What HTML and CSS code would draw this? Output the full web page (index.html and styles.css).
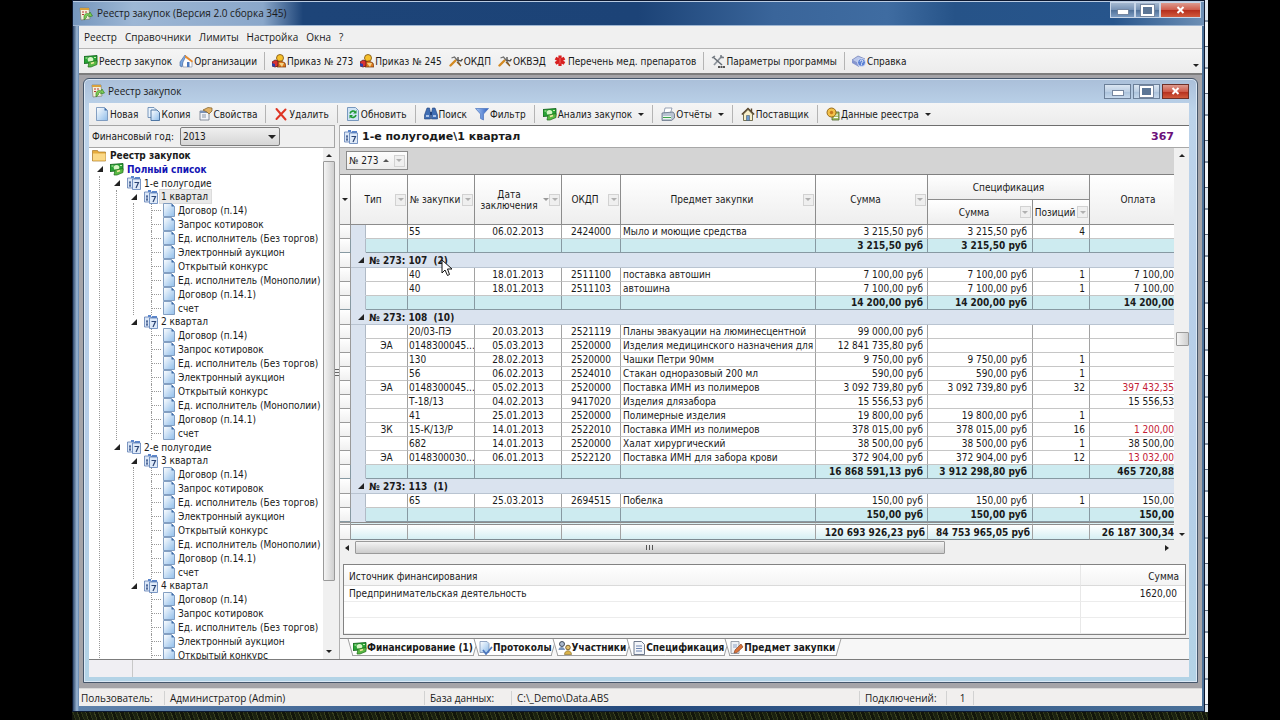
FILE: index.html
```html
<!DOCTYPE html>
<html lang="ru">

<head>
    <meta charset="UTF-8">
    <meta name="viewport" content="width=device-width, initial-scale=1.0">
    <title>Реестр закупок</title>
    <link rel="stylesheet" href="styles.css">
</head>

<body>
    <!-- icon set -->
    <svg class="defs" aria-hidden="true">
        <defs>
            <linearGradient id="paper" x1="0" y1="0" x2="1" y2="1">
                <stop offset="0" stop-color="#ffffff" />
                <stop offset="1" stop-color="#8fbdea" />
            </linearGradient>
            <linearGradient id="blue" x1="0" y1="0" x2="1" y2="0">
                <stop offset="0" stop-color="#a9c8f5" />
                <stop offset="1" stop-color="#2d5fc0" />
            </linearGradient>
        </defs>
        <symbol id="app" viewBox="0 0 14 14">
            <path d="M1 1h9l1 11-9 1z" fill="#f4f1dc" stroke="#7d7d6c" stroke-width=".7" />
            <path d="M1 1h9v2H1z" fill="#d9a13c" />
            <path d="M3 5h2M6 5h2M3 7.500h2" stroke="#b33" stroke-width="1" />
            <path d="M5 9c1-3 4-3 5-2l1-2 2.500 4-4 1 .7-1.500c-1.500-.6-2.500 0-3 2.500L5 13z" fill="#7ccb55" stroke="#2c7a1c" stroke-width=".6" />
        </symbol>
        <symbol id="money" viewBox="0 0 14 14">
            <path d="M0 2.500l13-1v7l-13 1z" fill="#2aa336" stroke="#0c5a14" stroke-width=".8" />
            <ellipse cx="6.500" cy="5.500" rx="2.800" ry="2.500" fill="#d8f5c6" />
            <path d="M1.500 4h2M10 3.500h2" stroke="#c9f0b0" />
            <path d="M5 8l8-1.500v4L7 13H4z" fill="#59b943" stroke="#1d6c1a" stroke-width=".7" />
            <path d="M7 9.500l3-1" stroke="#f5e7a0" stroke-width="1.500" />
        </symbol>
        <symbol id="house" viewBox="0 0 14 14">
            <path d="M3 7l4-5 6 5v6H4z" fill="#fdfdfd" stroke="#8a93a8" stroke-width=".7" />
            <path d="M1 8l5-7 1 1-3 6-1 5-2-1z" fill="#7aa7e0" stroke="#42659d" stroke-width=".6" />
            <path d="M6 1l8 6-1 1.500-7-5z" fill="#e88a2c" />
            <path d="M8 8h2.500v5H8z" fill="#4a78bf" />
        </symbol>
        <symbol id="order" viewBox="0 0 14 14">
            <circle cx="8" cy="4" r="3.500" fill="#f6c12c" stroke="#7a4c0a" stroke-width=".8" />
            <path d="M5 8l4-1 4 2 1 4H5z" fill="#e07a1e" stroke="#6d3206" stroke-width=".7" />
            <path d="M0 8l3-2 3 1v5l-3 1-3-1z" fill="#d93333" stroke="#4a1212" stroke-width=".7" />
            <path d="M0 9l3 1v3l-3-1z" fill="#2c3ea8" />
            <path d="M7 9l3 4 2-4" fill="#f3d58a" />
        </symbol>
        <symbol id="hammer" viewBox="0 0 14 14">
            <path d="M1.500 11.500l5-5" stroke="#d38a22" stroke-width="2.400" stroke-linecap="round" />
            <path d="M2.500 4l3-1 3.500 4 2 4" fill="none" stroke="#6b6b6b" stroke-width="1.300" />
            <path d="M9 3v3l3 1 1.500-2" fill="none" stroke="#4b4b4b" stroke-width="1.300" />
            <path d="M8 8l4 4" stroke="#8c5a16" stroke-width="1.300" />
        </symbol>
        <symbol id="med" viewBox="0 0 14 14">
            <path d="M7 1.500v10.500M2.500 4.200l9 5.200M11.500 4.200l-9 5.200" stroke="#d81f1f" stroke-width="3.200" />
            <path d="M7 4v5.500" stroke="#f47a7a" stroke-width=".8" />
        </symbol>
        <symbol id="tools" viewBox="0 0 14 14">
            <path d="M3 11l8-9" stroke="#8d949c" stroke-width="1.800" />
            <path d="M2 3l9 8" stroke="#666d75" stroke-width="1.500" />
            <path d="M1 4l3-2M10 1v2.500h3" fill="none" stroke="#777e86" stroke-width="1.500" />
            <path d="M7 13h7" stroke="#222" stroke-width="1.500" stroke-dasharray="2 .5" />
        </symbol>
        <symbol id="help" viewBox="0 0 14 14">
            <path d="M0 6l6-4 7 3-6 5z" fill="#b9c6ea" stroke="#6878b4" stroke-width=".7" />
            <path d="M0 6v3l7 4V10z" fill="#8595cf" />
            <circle cx="9.500" cy="8.500" r="4" fill="#5c82d4" stroke="#e8eefc" stroke-width=".8" />
            <path d="M8.200 7.500c0-2 2.800-2 2.600 0-.2 1-1.300 1-1.300 2M9.500 10.300v1" stroke="#fff" fill="none" />
        </symbol>
        <symbol id="doc" viewBox="0 0 14 14">
            <path d="M1.500.5h8l3 3v10h-11z" fill="url(#paper)" stroke="#7795bb" stroke-width=".9" />
            <path d="M9.500.5v3h3z" fill="#3c6ba8" />
        </symbol>
        <symbol id="copy" viewBox="0 0 14 14">
            <path d="M1 .5h6l2 2v8H1z" fill="#e9f3fd" stroke="#5c81ac" stroke-width=".8" />
            <path d="M4 3h6l2.500 2.500v8H4z" fill="url(#paper)" stroke="#426b9b" stroke-width=".9" />
        </symbol>
        <symbol id="props" viewBox="0 0 14 14">
            <path d="M1 4h9v9H1z" fill="#f2f4f8" stroke="#6c7787" stroke-width=".8" />
            <path d="M1 4h9v2H1z" fill="#7b92b7" />
            <path d="M3 8h4M3 10h4" stroke="#8794a6" />
            <path d="M4 3l5-2.500 4 .5v3L10 7 8 5z" fill="#e2b164" stroke="#7a5a21" stroke-width=".7" />
        </symbol>
        <symbol id="del" viewBox="0 0 14 14">
            <path d="M2.500 2l9 10.500M11.500 2.500L2.500 12" stroke="#de3524" stroke-width="2" stroke-linecap="round" />
        </symbol>
        <symbol id="refresh" viewBox="0 0 14 14">
            <path d="M1.500.5h8l3 3v10h-11z" fill="#cfe3f5" stroke="#6c8fb8" stroke-width=".9" />
            <path d="M4 6.500c1-3 4-3 5-1.500M10 8c-1 3-4 3-5 1.500" fill="none" stroke="#1f9a34" stroke-width="1.700" />
            <path d="M10.500 3v3.500H7zM3.500 11.500V8H7z" fill="#1f9a34" />
        </symbol>
        <symbol id="find" viewBox="0 0 14 14">
            <path d="M3 1h2.500l1 5v6H.5V8zM8.500 1H11l2.500 7v4h-6V6z" fill="#3f6db3" stroke="#1f3f78" stroke-width=".6" />
            <path d="M6 5h2v3H6z" fill="#1f3f78" />
            <path d="M2 9h3M9 9h3" stroke="#cfe0fa" stroke-width="1.500" />
        </symbol>
        <symbol id="funnel" viewBox="0 0 14 14">
            <path d="M.5 1.500h13L8.500 7v6l-3-1.500V7z" fill="url(#blue)" stroke="#4a74bd" stroke-width=".7" />
        </symbol>
        <symbol id="printer" viewBox="0 0 14 14">
            <path d="M4 1h7l-1.500 5H3z" fill="#fff" stroke="#70809a" stroke-width=".7" />
            <path d="M1 6l11-1 1.500 2v4l-3 2.500H1z" fill="#b9c4d2" stroke="#56657a" stroke-width=".7" />
            <path d="M2 9h8v3H2z" fill="#eef8ee" />
            <path d="M2 10.500h8" stroke="#3ba24b" />
        </symbol>
        <symbol id="home" viewBox="0 0 14 14">
            <path d="M2.500 7L7 2.500 11.500 7v6.500h-9z" fill="#f8efcb" stroke="#56502e" stroke-width=".8" />
            <path d="M.8 7.500L7 1.500l6.200 6M10.500 1.500v3" fill="none" stroke="#55432a" stroke-width="1.400" />
            <path d="M5.500 8.500h3v5h-3z" fill="#6c9ad0" stroke="#4c5d6b" stroke-width=".6" />
        </symbol>
        <symbol id="data" viewBox="0 0 14 14">
            <path d="M6 5h7v8H6z" fill="#a5c26d" stroke="#4d622a" stroke-width=".8" />
            <path d="M9 8h3M8 10.500h4" stroke="#fff" />
            <circle cx="5.500" cy="5.500" r="4.500" fill="#f2c14a" stroke="#8c5f10" stroke-width=".9" />
            <circle cx="5.500" cy="5.500" r="1.700" fill="#c7791c" />
        </symbol>
        <symbol id="folder" viewBox="0 0 14 14">
            <path d="M.5 2.500h5l1 1.500h7v9H.5z" fill="#e6ab3c" stroke="#a8782a" stroke-width=".7" />
            <path d="M1 5.500h12.500v7H1z" fill="#fbd987" />
        </symbol>
        <symbol id="cal" viewBox="0 0 14 14">
            <path d="M.5 2h7v10h-7z" fill="#dbe7f7" stroke="#5f7fb4" stroke-width=".8" />
            <path d="M2 6h2M3 6v4M2 10h2" stroke="#26457f" />
            <path d="M4 1h3M8 2h5" stroke="#5b86cc" stroke-width="2" />
            <path d="M5.500 3h8v10.500h-8z" fill="#dfeaf8" stroke="#5b7db5" stroke-width=".8" />
            <path d="M7.500 6.500h4L9 12" fill="none" stroke="#2c4575" stroke-width="1.200" />
        </symbol>
        <symbol id="proto" viewBox="0 0 14 14">
            <path d="M1 .5h7l2 2v9H1z" fill="url(#paper)" stroke="#7c92b5" stroke-width=".8" />
            <path d="M4 9l3 4 6-7" fill="none" stroke="#4b76bd" stroke-width="1.700" />
        </symbol>
        <symbol id="users" viewBox="0 0 14 14">
            <circle cx="4" cy="3" r="2.500" fill="#a9b8cd" stroke="#333d4c" stroke-width=".9" />
            <path d="M.5 9c0-4 6-4 6.500 0z" fill="#7d96ba" />
            <circle cx="10" cy="6.500" r="2.300" fill="#e3c06c" stroke="#6d5320" stroke-width=".9" />
            <path d="M6.500 13.500c0-5 7-5 7 0z" fill="#d9b24a" stroke="#7c611c" stroke-width=".6" />
        </symbol>
        <symbol id="spec" viewBox="0 0 14 14">
            <path d="M2 .5h7.500l3 3v10H2z" fill="#f3f5f9" stroke="#5f6b80" stroke-width=".9" />
            <path d="M4 5h6M4 7.500h6M4 10h6" stroke="#6d86b3" />
        </symbol>
        <symbol id="edit" viewBox="0 0 14 14">
            <path d="M1 .5h8v12H1z" fill="#eef1f6" stroke="#848d9b" stroke-width=".8" />
            <path d="M3 4h4M3 6h4" stroke="#8ea2c4" />
            <path d="M4 12l1-3 6-6 2 3-6 5.500z" fill="#d9713a" stroke="#7c3a17" stroke-width=".6" />
        </symbol>
    </svg>

    <div class="desktop">
        <div class="window">
            <header class="titlebar">
                <svg class="icon"><use href="#app" /></svg>
                <span class="caption">Реестр закупок (Версия 2.0 сборка 345)</span>
                <div class="win-btns">
                    <button class="wb min" aria-label="Свернуть"></button>
                    <button class="wb max" aria-label="Развернуть"></button>
                    <button class="wb close" aria-label="Закрыть"><svg viewBox="0 0 8 8"><path d="M1 1l6 6M7 1L1 7" /></svg></button>
                </div>
            </header>

            <nav class="menu">
                <button>Реестр</button>
                <button>Справочники</button>
                <button>Лимиты</button>
                <button>Настройка</button>
                <button>Окна</button>
                <button>?</button>
            </nav>

            <div class="toolbar main-bar">
                <button><svg class="icon"><use href="#money" /></svg>Реестр закупок</button>
                <button><svg class="icon"><use href="#house" /></svg>Организации</button>
                <i class="sep"></i>
                <button><svg class="icon"><use href="#order" /></svg>Приказ № 273</button>
                <button><svg class="icon"><use href="#order" /></svg>Приказ № 245</button>
                <button><svg class="icon"><use href="#hammer" /></svg>ОКДП</button>
                <button><svg class="icon"><use href="#hammer" /></svg>ОКВЭД</button>
                <button><svg class="icon"><use href="#med" /></svg>Перечень мед. препаратов</button>
                <i class="sep"></i>
                <button><svg class="icon"><use href="#tools" /></svg>Параметры программы</button>
                <i class="sep"></i>
                <button><svg class="icon"><use href="#help" /></svg>Справка</button>
                <i class="tri more"></i>
            </div>

            <main class="mdi">
                <section class="child">
                    <header class="child-title">
                        <svg class="icon"><use href="#app" /></svg>
                        <span>Реестр закупок</span>
                        <div class="win-btns">
                            <button class="wb min" aria-label="Свернуть"></button>
                            <button class="wb max" aria-label="Развернуть"></button>
                            <button class="wb close" aria-label="Закрыть"><svg viewBox="0 0 8 8"><path d="M1 1l6 6M7 1L1 7" /></svg></button>
                        </div>
                    </header>

                    <div class="toolbar child-bar">
                        <button><svg class="icon"><use href="#doc" /></svg>Новая</button>
                        <button><svg class="icon"><use href="#copy" /></svg>Копия</button>
                        <button><svg class="icon"><use href="#props" /></svg>Свойства</button>
                        <i class="sep"></i>
                        <button><svg class="icon"><use href="#del" /></svg>Удалить</button>
                        <i class="sep"></i>
                        <button><svg class="icon"><use href="#refresh" /></svg>Обновить</button>
                        <i class="sep"></i>
                        <button><svg class="icon"><use href="#find" /></svg>Поиск</button>
                        <button><svg class="icon"><use href="#funnel" /></svg>Фильтр</button>
                        <i class="sep"></i>
                        <button><svg class="icon"><use href="#money" /></svg>Анализ закупок<i class="tri"></i></button>
                        <i class="sep"></i>
                        <button><svg class="icon"><use href="#printer" /></svg>Отчёты<i class="tri"></i></button>
                        <i class="sep"></i>
                        <button><svg class="icon"><use href="#home" /></svg>Поставщик</button>
                        <i class="sep"></i>
                        <button><svg class="icon"><use href="#data" /></svg>Данные реестра<i class="tri"></i></button>
                    </div>

                    <div class="work">
                        <aside class="left">
                            <div class="year">
                                <label for="year">Финансовый год:</label>
                                <div class="combo">
                                    <select id="year"><option>2013</option></select>
                                    <i class="tri"></i>
                                </div>
                            </div>
                            <div class="tree-box">
                                <div class="tree">
                                    <div class="root"><svg class="icon"><use href="#folder" /></svg>Реестр закупок</div>
                                    <ul class="top">
                                        <li>
                                            <div class="node full"><i class="arr"></i><svg class="icon"><use href="#money" /></svg>Полный список</div>
                                            <ul class="line">
                                                <li>
                                                    <div class="node"><i class="arr"></i><svg class="icon"><use href="#cal" /></svg>1-е полугодие</div>
                                                    <ul class="line">
                                                        <li>
                                                            <div class="node quarter"><i class="arr"></i><svg class="icon"><use href="#cal" /></svg><span class="selected">1 квартал</span></div>
                                                            <ul class="line">
                                                                <li class="leaf"><svg class="icon"><use href="#doc" /></svg>Договор (п.14)</li>
                                                                <li class="leaf"><svg class="icon"><use href="#doc" /></svg>Запрос котировок</li>
                                                                <li class="leaf"><svg class="icon"><use href="#doc" /></svg>Ед. исполнитель (Без торгов)</li>
                                                                <li class="leaf"><svg class="icon"><use href="#doc" /></svg>Электронный аукцион</li>
                                                                <li class="leaf"><svg class="icon"><use href="#doc" /></svg>Открытый конкурс</li>
                                                                <li class="leaf"><svg class="icon"><use href="#doc" /></svg>Ед. исполнитель (Монополии)</li>
                                                                <li class="leaf"><svg class="icon"><use href="#doc" /></svg>Договор (п.14.1)</li>
                                                                <li class="leaf"><svg class="icon"><use href="#doc" /></svg>счет</li>
                                                            </ul>
                                                        </li>
                                                        <li>
                                                            <div class="node quarter"><i class="arr"></i><svg class="icon"><use href="#cal" /></svg>2 квартал</div>
                                                            <ul>
                                                                <li class="leaf"><svg class="icon"><use href="#doc" /></svg>Договор (п.14)</li>
                                                                <li class="leaf"><svg class="icon"><use href="#doc" /></svg>Запрос котировок</li>
                                                                <li class="leaf"><svg class="icon"><use href="#doc" /></svg>Ед. исполнитель (Без торгов)</li>
                                                                <li class="leaf"><svg class="icon"><use href="#doc" /></svg>Электронный аукцион</li>
                                                                <li class="leaf"><svg class="icon"><use href="#doc" /></svg>Открытый конкурс</li>
                                                                <li class="leaf"><svg class="icon"><use href="#doc" /></svg>Ед. исполнитель (Монополии)</li>
                                                                <li class="leaf"><svg class="icon"><use href="#doc" /></svg>Договор (п.14.1)</li>
                                                                <li class="leaf"><svg class="icon"><use href="#doc" /></svg>счет</li>
                                                            </ul>
                                                        </li>
                                                    </ul>
                                                </li>
                                                <li>
                                                    <div class="node"><i class="arr"></i><svg class="icon"><use href="#cal" /></svg>2-е полугодие</div>
                                                    <ul>
                                                        <li>
                                                            <div class="node quarter"><i class="arr"></i><svg class="icon"><use href="#cal" /></svg>3 квартал</div>
                                                            <ul class="line">
                                                                <li class="leaf"><svg class="icon"><use href="#doc" /></svg>Договор (п.14)</li>
                                                                <li class="leaf"><svg class="icon"><use href="#doc" /></svg>Запрос котировок</li>
                                                                <li class="leaf"><svg class="icon"><use href="#doc" /></svg>Ед. исполнитель (Без торгов)</li>
                                                                <li class="leaf"><svg class="icon"><use href="#doc" /></svg>Электронный аукцион</li>
                                                                <li class="leaf"><svg class="icon"><use href="#doc" /></svg>Открытый конкурс</li>
                                                                <li class="leaf"><svg class="icon"><use href="#doc" /></svg>Ед. исполнитель (Монополии)</li>
                                                                <li class="leaf"><svg class="icon"><use href="#doc" /></svg>Договор (п.14.1)</li>
                                                                <li class="leaf"><svg class="icon"><use href="#doc" /></svg>счет</li>
                                                            </ul>
                                                        </li>
                                                        <li>
                                                            <div class="node quarter"><i class="arr"></i><svg class="icon"><use href="#cal" /></svg>4 квартал</div>
                                                            <ul>
                                                                <li class="leaf"><svg class="icon"><use href="#doc" /></svg>Договор (п.14)</li>
                                                                <li class="leaf"><svg class="icon"><use href="#doc" /></svg>Запрос котировок</li>
                                                                <li class="leaf"><svg class="icon"><use href="#doc" /></svg>Ед. исполнитель (Без торгов)</li>
                                                                <li class="leaf"><svg class="icon"><use href="#doc" /></svg>Электронный аукцион</li>
                                                                <li class="leaf"><svg class="icon"><use href="#doc" /></svg>Открытый конкурс</li>
                                                            </ul>
                                                        </li>
                                                    </ul>
                                                </li>
                                            </ul>
                                        </li>
                                    </ul>
                                </div>
                                <div class="vscroll tree-scroll">
                                    <i class="tri up"></i>
                                    <div class="thumb"></div>
                                    <div class="track"></div>
                                    <i class="tri"></i>
                                </div>
                            </div>
                        </aside>

                        <div class="splitter"><i class="grip"></i></div>

                        <section class="right">
                            <div class="heading">
                                <svg class="icon"><use href="#cal" /></svg>
                                <h1>1-е полугодие\1 квартал</h1>
                                <b class="count">367</b>
                            </div>

                            <div class="grid-box">
                                <div class="grid">
                                    <div class="group-panel">
                                        <div class="group-chip">№ 273<i class="sort-up"></i><button class="flt" aria-label="Фильтр"></button></div>
                                    </div>
                                    <table class="data">
                                        <colgroup>
                                            <col class="c-ind"><col class="c-indent"><col class="c-type"><col class="c-num"><col class="c-date">
                                            <col class="c-okdp"><col><col class="c-sum"><col class="c-ssum"><col class="c-pos"><col class="c-pay">
                                        </colgroup>
                                        <thead>
                                            <tr>
                                                <th rowspan="2"><i class="tri"></i></th>
                                                <th rowspan="2" colspan="2"><div class="h"><span>Тип</span><button class="flt" aria-label="Фильтр"></button></div></th>
                                                <th rowspan="2"><div class="h"><span>№ закупки</span><button class="flt" aria-label="Фильтр"></button></div></th>
                                                <th rowspan="2"><div class="h"><span>Дата заключения</span><i class="sort-down"></i><button class="flt" aria-label="Фильтр"></button></div></th>
                                                <th rowspan="2"><div class="h"><span>ОКДП</span><button class="flt" aria-label="Фильтр"></button></div></th>
                                                <th rowspan="2"><div class="h"><span>Предмет закупки</span><button class="flt" aria-label="Фильтр"></button></div></th>
                                                <th rowspan="2"><div class="h"><span>Сумма</span><button class="flt" aria-label="Фильтр"></button></div></th>
                                                <th colspan="2">Спецификация</th>
                                                <th rowspan="2" class="pay">Оплата</th>
                                            </tr>
                                            <tr>
                                                <th><div class="h"><span>Сумма</span><button class="flt" aria-label="Фильтр"></button></div></th>
                                                <th><div class="h"><span>Позиций</span><button class="flt" aria-label="Фильтр"></button></div></th>
                                            </tr>
                                        </thead>
                                        <tbody>
                                            <tr><td></td><td></td><td></td><td>55</td><td>06.02.2013</td><td>2424000</td><td>Мыло и моющие средства</td><td>3 215,50 руб</td><td>3 215,50 руб</td><td>4</td><td></td></tr>
                                            <tr class="sum"><td></td><td></td><td></td><td></td><td></td><td></td><td></td><td>3 215,50 руб</td><td>3 215,50 руб</td><td></td><td></td></tr>
                                            <tr class="group"><td></td><td colspan="10"><i class="arr"></i>№ 273: 107 &nbsp;(2)</td></tr>
                                            <tr><td></td><td></td><td></td><td>40</td><td>18.01.2013</td><td>2511100</td><td>поставка автошин</td><td>7 100,00 руб</td><td>7 100,00 руб</td><td>1</td><td>7 100,00</td></tr>
                                            <tr><td></td><td></td><td></td><td>40</td><td>18.01.2013</td><td>2511103</td><td>автошина</td><td>7 100,00 руб</td><td>7 100,00 руб</td><td>1</td><td>7 100,00</td></tr>
                                            <tr class="sum"><td></td><td></td><td></td><td></td><td></td><td></td><td></td><td>14 200,00 руб</td><td>14 200,00 руб</td><td></td><td>14 200,00</td></tr>
                                            <tr class="group"><td></td><td colspan="10"><i class="arr"></i>№ 273: 108 &nbsp;(10)</td></tr>
                                            <tr><td></td><td></td><td></td><td>20/03-ПЭ</td><td>20.03.2013</td><td>2521119</td><td>Планы эвакуации на люминесцентной</td><td>99 000,00 руб</td><td></td><td></td><td></td></tr>
                                            <tr><td></td><td></td><td>ЭА</td><td>0148300045...</td><td>05.03.2013</td><td>2520000</td><td>Изделия медицинского назначения для</td><td>12 841 735,80 руб</td><td></td><td></td><td></td></tr>
                                            <tr><td></td><td></td><td></td><td>130</td><td>28.02.2013</td><td>2520000</td><td>Чашки Петри 90мм</td><td>9 750,00 руб</td><td>9 750,00 руб</td><td>1</td><td></td></tr>
                                            <tr><td></td><td></td><td></td><td>56</td><td>06.02.2013</td><td>2524010</td><td>Стакан одноразовый 200 мл</td><td>590,00 руб</td><td>590,00 руб</td><td>1</td><td></td></tr>
                                            <tr><td></td><td></td><td>ЭА</td><td>0148300045...</td><td>05.02.2013</td><td>2520000</td><td>Поставка ИМН из полимеров</td><td>3 092 739,80 руб</td><td>3 092 739,80 руб</td><td>32</td><td class="red">397 432,35</td></tr>
                                            <tr><td></td><td></td><td></td><td>Т-18/13</td><td>04.02.2013</td><td>9417020</td><td>Изделия длязабора</td><td>15 556,53 руб</td><td></td><td></td><td>15 556,53</td></tr>
                                            <tr><td></td><td></td><td></td><td>41</td><td>25.01.2013</td><td>2520000</td><td>Полимерные изделия</td><td>19 800,00 руб</td><td>19 800,00 руб</td><td>1</td><td></td></tr>
                                            <tr><td></td><td></td><td>ЗК</td><td>15-К/13/Р</td><td>14.01.2013</td><td>2522010</td><td>Поставка ИМН из полимеров</td><td>378 015,00 руб</td><td>378 015,00 руб</td><td>16</td><td class="red">1 200,00</td></tr>
                                            <tr><td></td><td></td><td></td><td>682</td><td>14.01.2013</td><td>2520000</td><td>Халат хирургический</td><td>38 500,00 руб</td><td>38 500,00 руб</td><td>1</td><td>38 500,00</td></tr>
                                            <tr><td></td><td></td><td>ЭА</td><td>0148300030...</td><td>06.01.2013</td><td>2522120</td><td>Поставка ИМН для забора крови</td><td>372 904,00 руб</td><td>372 904,00 руб</td><td>12</td><td class="red">13 032,00</td></tr>
                                            <tr class="sum"><td></td><td></td><td></td><td></td><td></td><td></td><td></td><td>16 868 591,13 руб</td><td>3 912 298,80 руб</td><td></td><td>465 720,88</td></tr>
                                            <tr class="group"><td></td><td colspan="10"><i class="arr"></i>№ 273: 113 &nbsp;(1)</td></tr>
                                            <tr><td></td><td></td><td></td><td>65</td><td>25.03.2013</td><td>2694515</td><td>Побелка</td><td>150,00 руб</td><td>150,00 руб</td><td>1</td><td>150,00</td></tr>
                                            <tr class="sum"><td></td><td></td><td></td><td></td><td></td><td></td><td></td><td>150,00 руб</td><td>150,00 руб</td><td></td><td>150,00</td></tr>
                                        </tbody>
                                        <tfoot>
                                            <tr class="total"><td></td><td colspan="2"></td><td></td><td></td><td></td><td></td><td>120 693 926,23 руб</td><td>84 753 965,05 руб</td><td></td><td>26 187 300,34</td></tr>
                                        </tfoot>
                                    </table>
                                    <svg class="cursor" viewBox="0 0 12 18"><path d="M1 1v13l3-3 2.500 5.500 2-1L6.500 10H11z" fill="#fff" stroke="#111" /></svg>
                                </div>
                                <div class="vscroll grid-scroll">
                                    <i class="tri up"></i>
                                    <div class="track"></div>
                                    <div class="thumb"></div>
                                    <div class="track"></div>
                                    <i class="tri"></i>
                                </div>
                            </div>
                            <div class="hscroll">
                                <i class="tri prev"></i>
                                <div class="thumb"><i class="grip"></i></div>
                                <div class="track"></div>
                                <i class="tri next"></i>
                            </div>

                            <div class="detail">
                                <table>
                                    <thead>
                                        <tr><th>Источник финансирования</th><th>Сумма</th></tr>
                                    </thead>
                                    <tbody>
                                        <tr><td>Предпринимательская деятельность</td><td>1620,00</td></tr>
                                        <tr><td></td><td></td></tr>
                                        <tr><td></td><td></td></tr>
                                    </tbody>
                                </table>
                            </div>

                            <div class="tabs">
                                <button class="tab"><svg class="icon"><use href="#money" /></svg>Финансирование (1)</button>
                                <button class="tab"><svg class="icon"><use href="#proto" /></svg>Протоколы</button>
                                <button class="tab"><svg class="icon"><use href="#users" /></svg>Участники</button>
                                <button class="tab"><svg class="icon"><use href="#spec" /></svg>Спецификация</button>
                                <button class="tab"><svg class="icon"><use href="#edit" /></svg>Предмет закупки</button>
                            </div>
                        </section>
                    </div>

                    <div class="child-status"><i></i></div>
                </section>
            </main>

            <footer class="status">
                <span class="w-user">Пользователь:</span>
                <span class="w-name">Администратор (Admin)</span>
                <span class="w-label">База данных:</span>
                <span class="w-path">C:\_Demo\Data.ABS</span>
                <span class="w-label">Подключений:</span>
                <span class="w-num">1</span>
                <span class="w-rest"></span>
            </footer>
        </div>
        <div class="wallpaper"></div>
    </div>
</body>

</html>
```

FILE: styles.css
```css
* {
    margin: 0;
    padding: 0;
    box-sizing: border-box;
}

body {
    background: #000;
    color: #1a1a1a;
    font-family: "DejaVu Sans Condensed", "DejaVu Sans", sans-serif;
    font-size: 10px;
    line-height: 13px;
    overflow: hidden;
}

button,
select {
    font: inherit;
    color: inherit;
    background: none;
    border: none;
}

ul {
    list-style: none;
}

.defs {
    position: absolute;
    width: 0;
    height: 0;
}

.icon {
    width: 14px;
    height: 14px;
    flex: none;
}

.tri {
    flex: none;
    width: 0;
    height: 0;
    border: 3px solid transparent;
    border-top-color: #222;
    border-bottom: 0;
}

.tri.up {
    border-bottom: 3px solid #222;
    border-top: 0;
}

.tri.prev {
    border: 3px solid transparent;
    border-right: 4px solid #222;
    border-left: 0;
}

.tri.next {
    border: 3px solid transparent;
    border-left: 4px solid #222;
    border-right: 0;
}

/* desktop and main window */
.desktop {
    margin: 0 72px;
    height: 100vh;
    display: flex;
    flex-direction: column;
    padding-right: 3px;
    background: repeating-linear-gradient(#dfe6ee 0 20px, #8795a6 20px 22px, #f4f6f8 22px 46px, #5d6b7d 46px 47px);
}

.window {
    flex: 1;
    min-height: 0;
    display: flex;
    flex-direction: column;
    border: 1px solid #0c1830;
    padding: 0 2px 5px 6px;
    background: linear-gradient(90deg, #30496c, #9db8d6 4px, #5f82ab 6px, #24497c 50%, #4a7098);
}

.wallpaper {
    height: 8px;
    margin-right: -3px;
    background: repeating-linear-gradient(70deg, #12160b 0 3px, #2c3518 3px 4px, #1a2010 4px 7px, #38401f 7px 8px);
}

.titlebar {
    height: 25px;
    margin: 0 -2px 0 -6px;
    padding: 0 3px 0 6px;
    display: flex;
    align-items: center;
    gap: 4px;
    border-top: 1px solid #b9cbe2;
    border-bottom: 1px solid #9fb6d2;
    background: linear-gradient(90deg, #7596bd, #9db7d5 60px, #8aa7ca 190px, #1d4478 230px, #1c4377 50%, #3a659a 62%, #3f6ca1 72%, #265388 78%, #27558c 92%, #6d8fb5);
    font-family: "Open Sans", "Noto Sans", sans-serif;
}

.win-btns {
    margin-left: auto;
    display: flex;
}

.wb {
    width: 25px;
    height: 16px;
    border: 1px solid #c8d6e8;
    background: linear-gradient(#a4b8d0, #7490b3 50%, #4f7099 51%, #7c9cc2);
    display: flex;
    align-items: center;
    justify-content: center;
}

.wb.min::before {
    content: "";
    width: 10px;
    height: 4px;
    margin-top: 4px;
    background: #fff;
    border: 1px solid #7687a0;
}

.wb.max::before {
    content: "";
    width: 9px;
    height: 7px;
    background: #5c7696;
    border: 2px solid #fff;
    outline: 1px solid #7687a0;
}

.wb.close {
    background: linear-gradient(#dd9a8e, #cf5b4a 50%, #b42d1c 51%, #d15a3c);
}

.wb svg {
    width: 9px;
    height: 8px;
    stroke: #fff;
    stroke-width: 2px;
}

.titlebar .win-btns {
    align-self: flex-start;
}

.titlebar .close {
    width: 41px;
}

.menu {
    height: 23px;
    padding-left: 5px;
    display: flex;
    align-items: center;
    gap: 8px;
    background: #f0f0f0;
    border-bottom: 1px solid #b5b5b5;
    font-family: "Open Sans", "Noto Sans", sans-serif;
}

.toolbar {
    display: flex;
    align-items: center;
    background: linear-gradient(#f5f5f5, #ececec);
}

.toolbar button {
    display: flex;
    align-items: center;
    gap: 1px;
    white-space: nowrap;
}

.toolbar button .tri {
    margin-left: 5px;
}

.sep {
    width: 1px;
    height: 18px;
    background: #b4b4b4;
}

.main-bar {
    height: 24px;
    padding: 0 3px 0 5px;
    gap: 7px;
}

.more {
    margin: 9px 0 0 auto;
}

.mdi {
    flex: 1;
    min-height: 0;
    display: flex;
    border-top: 2px solid #7d7d7d;
    padding: 3px 4px 5px;
    background: #a5a4a8;
}

/* child window */
.child {
    flex: 1;
    min-width: 0;
    display: flex;
    flex-direction: column;
    padding: 0 8px 5px 5px;
    border: 1px solid #45566b;
    border-radius: 6px 6px 0 0;
    background: linear-gradient(#aabfd9, #bcd3ea 30px, #b5cde8 60%, #b3d3e6);
    box-shadow: inset 0 0 0 1px #dbe8f5;
}

.child-title {
    height: 24px;
    flex: none;
    padding-left: 2px;
    display: flex;
    align-items: center;
    gap: 3px;
    font-family: "Open Sans", "Noto Sans", sans-serif;
}

.child-title .win-btns {
    gap: 2px;
}

.child-title .wb {
    width: 27px;
    height: 15px;
    border-color: #6b7f98;
}

.child-title .wb:not(.close) {
    background: linear-gradient(#dbe6f2, #bccfe4 50%, #a9c1db 51%, #c5d8ec);
}

.child-title .wb.close {
    border-color: #6e3028;
}

.child-bar {
    height: 22px;
    padding-left: 6px;
    gap: 8px;
    flex: none;
}

.work {
    flex: 1;
    min-height: 0;
    display: flex;
    background: #f0f0f0;
    border-bottom: 1px solid #7c7c7c;
}

.left {
    width: 246px;
    flex: none;
    display: flex;
    flex-direction: column;
}

.year {
    height: 23px;
    flex: none;
    padding-left: 3px;
    display: flex;
    align-items: center;
    gap: 6px;
    border: 1px solid #a5a5a5;
    border-left: 0;
}

.combo {
    display: flex;
    align-items: center;
    width: 100px;
    height: 19px;
    padding-right: 3px;
    border: 1px solid #7d7d7d;
    border-radius: 2px;
    background: linear-gradient(#efefef, #d6d6d6);
}

.combo select {
    flex: 1;
    appearance: none;
    padding-left: 2px;
}

.combo .tri {
    border-width: 4px 4px 0;
}

.tree-box {
    flex: 1;
    min-height: 0;
    display: flex;
}

.tree {
    flex: 1;
    background: #fff;
    overflow: hidden;
    white-space: nowrap;
}

.root,
.node,
.leaf {
    display: flex;
    align-items: center;
    height: 14px;
}

.root {
    padding-left: 3px;
    gap: 4px;
    font-weight: bold;
}

.top {
    padding-left: 7px;
}

.top ul {
    margin-left: 3px;
    padding-left: 13px;
    border-left: 1px dotted transparent;
}

.top ul.line {
    border-left-color: #999;
}

.node .icon {
    margin: 0 3px 0 6px;
}

.full {
    font-weight: bold;
    color: #1414b4;
}

.node.quarter {
    height: 13px;
}

.selected {
    margin-left: -1px;
    padding: 0 3px 0 1px;
    background: #e9e9e9;
    outline: 1px solid #dcdcdc;
}

.leaf {
    margin-left: 4px;
    border-left: 1px dotted #999;
}

.leaf::before {
    content: "";
    width: 9px;
    border-top: 1px dotted #999;
}

.leaf .icon {
    margin: 0 2px 0 1px;
}

.arr {
    width: 0;
    height: 0;
    flex: none;
    margin: 0 1px;
    border-left: 6px solid transparent;
    border-bottom: 6px solid #222;
}

.vscroll {
    width: 12px;
    flex: none;
    display: flex;
    flex-direction: column;
    align-items: center;
    gap: 4px;
    padding: 6px 0;
    background: #f0f0f0;
}

.vscroll .thumb {
    width: 100%;
    border: 1px solid #9a9a9a;
    border-radius: 1px;
    background: linear-gradient(90deg, #f4f4f4, #cfcfcf);
}

.tree-scroll .thumb {
    flex: 421;
}

.tree-scroll .track {
    flex: 62;
}

.grid-scroll {
    width: 15px;
    padding: 6px 0 4px;
}

.grid-scroll .track:nth-child(2) {
    flex: 170;
}

.grid-scroll .track:nth-child(4) {
    flex: 183;
}

.grid-scroll .thumb {
    height: 14px;
    margin-left: 1px;
    width: 13px;
}

.splitter {
    width: 5px;
    flex: none;
    border-right: 1px solid #b0b0b0;
}

.right {
    flex: 1;
    min-width: 0;
    display: flex;
    flex-direction: column;
}

.heading {
    height: 23px;
    flex: none;
    padding: 0 15px 0 4px;
    display: flex;
    align-items: center;
    gap: 4px;
    background: #fff;
    border-top: 1px solid #6e6e6e;
    border-bottom: 1px solid #a8a8a8;
    font-family: "DejaVu Sans", sans-serif;
    font-size: 11px;
}

.heading h1 {
    font-size: 11px;
}

.count {
    margin-left: auto;
    color: #6b0f7a;
}

.grid-box {
    display: flex;
}

.grid {
    flex: 1;
    min-width: 0;
    overflow: hidden;
    position: relative;
}

.group-panel {
    height: 27px;
    padding: 3px 6px;
    background: #d4d4d4;
    border-bottom: 1px solid #808080;
}

.group-chip {
    width: 62px;
    height: 19px;
    padding: 0 2px;
    display: flex;
    align-items: center;
    justify-content: space-between;
    border: 1px solid #8a8a8a;
    background: linear-gradient(#fdfdfd, #ececec);
}

.flt {
    width: 11px;
    height: 12px;
    flex: none;
    display: flex;
    align-items: center;
    justify-content: center;
    border: 1px solid #d2d2d2;
    background: #efefef;
}

.flt::before {
    content: "";
    border: 3px solid transparent;
    border-top-color: #b0b0b0;
    border-bottom: 0;
}

.sort-up,
.sort-down {
    border: 3px solid transparent;
    border-bottom-color: #555;
    border-top: 0;
}

.sort-down {
    border-top: 3px solid #999;
    border-bottom: 0;
}

.data {
    width: 100%;
    table-layout: fixed;
    border-collapse: separate;
    border-spacing: 0;
    background: #fff;
}

.c-ind { width: 11px; }
.c-indent { width: 15px; }
.c-type { width: 42px; }
.c-num { width: 67px; }
.c-date { width: 87px; }
.c-okdp { width: 59px; }
.c-sum { width: 112px; }
.c-ssum { width: 105px; }
.c-pos { width: 57px; }
.c-pay { width: 84px; }

.data th {
    height: 25px;
    font-weight: normal;
    line-height: 11px;
    border-right: 1px solid #8c8c8c;
    border-bottom: 1px solid #8c8c8c;
    background: linear-gradient(#ffffff, #eeeeee);
}

.data th .tri {
    display: block;
    margin: 0 auto;
}

.data th.pay {
    padding-left: 12px;
    border-right: 0;
}

.h {
    display: flex;
    align-items: center;
    padding-right: 1px;
}

.h span {
    flex: 1;
}

.data td {
    height: 14px;
    line-height: 13px;
    padding: 0 2px;
    overflow: hidden;
    white-space: nowrap;
    border-right: 1px solid #a2a2a2;
    border-bottom: 1px solid #c6c6c6;
}

.data td:first-child {
    border-color: #9a9a9a;
    background: linear-gradient(#fff, #f0f0f0);
}

.data tbody td:nth-child(2) {
    background: #dae3ef;
    border-bottom-color: #dae3ef;
    border-right-color: #b0bac6;
}

.data td:nth-child(3),
.data td:nth-child(5),
.data td:nth-child(6) {
    text-align: center;
}

.data td:nth-child(4) {
    padding: 0 0 0 1px;
}

.data td:nth-child(n+8) {
    text-align: right;
    padding-right: 4px;
}

.data td:nth-child(9) {
    padding-right: 5px;
}

.data td:last-child {
    border-right: 0;
}

.data td:nth-child(11) {
    padding-right: 0;
}

.data .red {
    color: #c32033;
}

.data .sum td {
    font-weight: bold;
    border-color: #8799a2;
}

.data .sum td:nth-child(n+3) {
    background: #cdebf0;
}

.data .group td:last-child {
    height: 15px;
    padding-left: 6px;
    font-weight: bold;
    background: #dae3ef;
    border-bottom-color: #b9c4d1;
}

.group .arr {
    display: inline-block;
    margin: 0 5px 1px 1px;
}

.total td {
    height: 17px;
    padding-top: 1px;
    font-weight: bold;
    border-top: 3px double #8c8c8c;
    border-bottom-color: #7d8a91;
    background: linear-gradient(#ffffff, #d6eff3);
}

.data .total td:nth-child(n+7) {
    text-align: right;
    padding-right: 2px;
}

.data .total td:last-child {
    padding-right: 0;
}

.cursor {
    position: absolute;
    left: 101px;
    top: 111px;
    width: 12px;
    height: 18px;
}

.hscroll {
    height: 15px;
    flex: none;
    margin-right: 15px;
    padding: 1px 5px;
    display: flex;
    align-items: center;
    gap: 6px;
}

.hscroll .thumb {
    flex: 592;
    height: 13px;
    display: flex;
    justify-content: center;
    align-items: center;
    border: 1px solid #9a9a9a;
    border-radius: 1px;
    background: linear-gradient(#f4f4f4, #cccccc);
}

.hscroll .track {
    flex: 210;
}

.grip {
    width: 7px;
    height: 5px;
    background: repeating-linear-gradient(90deg, #555 0 1px, transparent 1px 3px);
}

.detail {
    flex: none;
    margin: 9px 3px 3px;
    height: 71px;
    border: 1px solid #828282;
    background: #fff;
    overflow: hidden;
}

.detail table {
    width: 100%;
    border-collapse: separate;
    border-spacing: 0;
}

.detail th {
    height: 21px;
    font-weight: normal;
    text-align: left;
    padding: 2px 5px 0;
    background: linear-gradient(#fff, #f4f4f4);
    border-bottom: 1px solid #dadada;
}

.detail td {
    height: 16px;
    padding: 0 5px;
    border-bottom: 1px solid #ececec;
}

.detail th:last-child,
.detail td:last-child {
    width: 105px;
    text-align: right;
    padding-right: 8px;
    border-left: 1px solid #e8e8e8;
}

.detail th:last-child {
    padding-right: 6px;
}

.tabs {
    flex: 1;
    display: flex;
    align-items: flex-start;
    padding-left: 10px;
    border-top: 1px solid #8a8a8a;
    background: #f7f7f7;
}

.tab {
    position: relative;
    z-index: 0;
    height: 17px;
    padding: 0 3px;
    display: flex;
    align-items: center;
    font-weight: bold;
    white-space: nowrap;
}

/* slanted sides of a tab */
.tab::before,
.tab::after {
    content: "";
    position: absolute;
    z-index: -1;
    top: 0;
    bottom: 0;
    background: #fff;
    border-bottom: 1px solid #a0a0a0;
}

.tab::before {
    left: 0;
    right: 50%;
    border-left: 1px solid #a0a0a0;
    transform: skewX(16deg);
}

.tab::after {
    left: 40%;
    right: 0;
    border-right: 1px solid #a0a0a0;
    transform: skewX(-16deg);
}

.splitter .grip {
    display: block;
    width: 4px;
    height: 7px;
    margin-top: 244px;
    background: repeating-linear-gradient(#666 0 1px, transparent 1px 3px);
}

.child-status {
    height: 17px;
    flex: none;
    background: #f0eff3;
}

.child-status i {
    display: block;
    width: 44px;
    height: 17px;
    border-right: 1px solid #c8c8c8;
}

.status {
    height: 18px;
    flex: none;
    display: flex;
    align-items: center;
    background: #f1efee;
    border-top: 1px solid #d9d9d9;
    font-family: "Open Sans", "Noto Sans", sans-serif;
    white-space: nowrap;
}

.status span {
    padding-left: 5px;
    border-right: 1px solid #d2d2d2;
    line-height: 14px;
}

.w-user { width: 86px; }
.w-name { width: 260px; }
.w-label { width: 87px; }
.w-path { flex: 1; }
.w-num { width: 27px; text-align: center; }

.status .w-user {
    padding-left: 2px;
}

.status .w-rest {
    width: 228px;
    border: 0;
}
```
